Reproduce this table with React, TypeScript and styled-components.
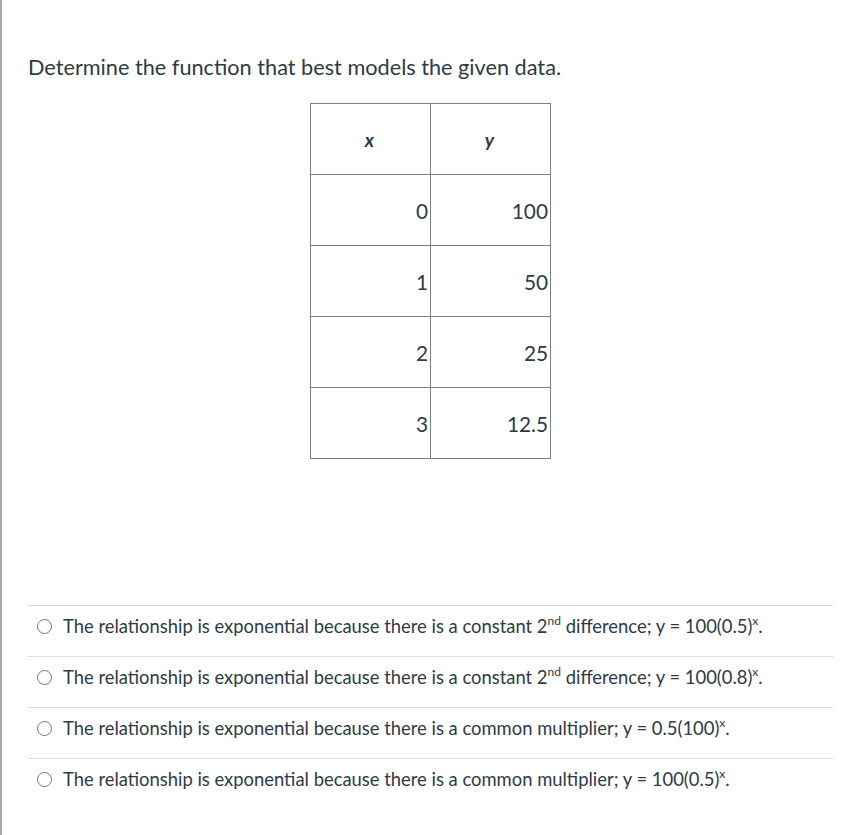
import React, { FC } from "react";
import styled, { createGlobalStyle } from "styled-components";

const GlobalStyle = createGlobalStyle`
  html, body {
    margin: 0;
    padding: 0;
    background: #fff;
  }
  body {
    font-family: Lato, "Open Sans", sans-serif;
    color: #2d3b45;
  }
`;

const Page = styled.div`
  min-height: 835px;
  border-left: 2px solid #a9a9a9;
  box-sizing: border-box;
  padding: 51px 23px 0 26px;
`;

const Question = styled.p`
  margin: 0;
  font-size: 21.7px;
  line-height: 32px;
`;

const DataTable = styled.table`
  margin: 20px auto 0;
  border-collapse: collapse;
  font-size: 20.8px;

  th,
  td {
    width: 120px;
    height: 71px;
    padding: 0 2px 0 0;
    border: 1px solid #7f7f7f;
    box-sizing: border-box;
  }

  th {
    text-align: center;
    font-weight: bold;
    font-style: italic;
    font-size: 19px;
  }

  td {
    text-align: right;
  }
`;

const Answers = styled.div`
  margin-top: 146px;
`;

const Answer = styled.label`
  display: flex;
  align-items: center;
  height: 51px;
  border-top: 1px solid #dcdcdc;
  box-sizing: border-box;
  padding-left: 9px;
  font-size: 18.4px;
  padding-bottom: 10px;

  sup {
    font-size: 12px;
    line-height: 0;
    position: relative;
    top: -1px;
  }
`;

const Radio = styled.span`
  flex-shrink: 0;
  width: 15px;
  height: 15px;
  border: 1.5px solid #73787c;
  border-radius: 50%;
  box-sizing: border-box;
  margin-right: 11px;
`;

const rows: [string, string][] = [
  ["0", "100"],
  ["1", "50"],
  ["2", "25"],
  ["3", "12.5"],
];

const App: FC = () => {
  return (
    <>
      <GlobalStyle />
      <Page>
        <Question>Determine the function that best models the given data.</Question>

        <DataTable>
          <thead>
            <tr>
              <th>x</th>
              <th>y</th>
            </tr>
          </thead>
          <tbody>
            {rows.map(([x, y]) => (
              <tr key={x}>
                <td>{x}</td>
                <td>{y}</td>
              </tr>
            ))}
          </tbody>
        </DataTable>

        <Answers>
          <Answer>
            <Radio />
            <span>
              The relationship is exponential because there is a constant 2<sup>nd</sup> difference; y = 100(0.5)
              <sup>x</sup>.
            </span>
          </Answer>
          <Answer>
            <Radio />
            <span>
              The relationship is exponential because there is a constant 2<sup>nd</sup> difference; y = 100(0.8)
              <sup>x</sup>.
            </span>
          </Answer>
          <Answer>
            <Radio />
            <span>
              The relationship is exponential because there is a common multiplier; y = 0.5(100)<sup>x</sup>.
            </span>
          </Answer>
          <Answer>
            <Radio />
            <span>
              The relationship is exponential because there is a common multiplier; y = 100(0.5)<sup>x</sup>.
            </span>
          </Answer>
        </Answers>
      </Page>
    </>
  );
};

export default App;
